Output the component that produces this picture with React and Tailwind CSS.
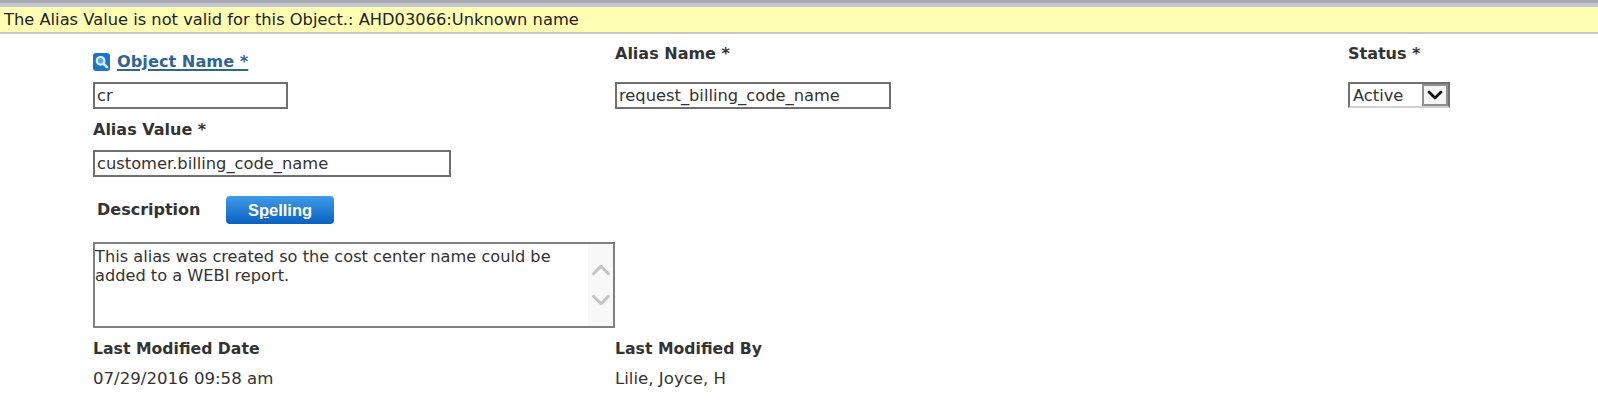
import React from 'react';
import { ChevronUp, ChevronDown } from 'lucide-react';

const font = "font-['DejaVu_Sans',Verdana,sans-serif]";

function Label({ children, className = 'text-[16px]' }) {
  return <div className={`leading-[20px] font-bold text-[#333333] ${className}`}>{children}</div>;
}

function Field({ value, width }) {
  return (
    <div className={`${width} h-[27px] border-2 border-[#707070] bg-white px-[2px] text-[16.3px] leading-[23px] text-[#333333] whitespace-nowrap overflow-hidden`}>
      {value}
    </div>
  );
}

function LookupIcon() {
  return (
    <svg width="17" height="18" viewBox="0 0 17 18">
      <rect width="17" height="18" rx="3" fill="#1a76c9" />
      <circle cx="7.6" cy="7.8" r="3.8" fill="#5aa5e6" stroke="#dcefff" strokeWidth="2.2" />
      <path d="M10.6 10.8 L14 14.2" stroke="#dcefff" strokeWidth="2.6" strokeLinecap="round" />
    </svg>
  );
}

export default function App() {
  return (
    <div className={`${font} w-[1598px] h-[404px] bg-white overflow-hidden`}>
      <div className="h-[7px] bg-[#c4c6d2] border-t-[3px] border-[#a9aab2]" />
      <div className="h-[27px] bg-[#ffffb4] border-b-2 border-[#c8c8c0] pl-[4px] text-[16.3px] leading-[25px] text-[#222222]">
        The Alias Value is not valid for this Object.: AHD03066:Unknown name
      </div>

      <div className="pl-[93px]">
        <div className="grid grid-cols-[522px_733px_1fr] h-[48px]">
          <div className="flex items-center gap-[7px] pt-[8px] h-[48px]">
            <LookupIcon />
            <a className="text-[16.2px] leading-[20px] font-bold text-[#2f6497] underline decoration-[1.5px] underline-offset-2">Object Name *</a>
          </div>
          <Label className="text-[16px] pt-[10px]">Alias Name *</Label>
          <Label className="text-[16px] pt-[10px]">Status *</Label>
        </div>

        <div className="grid grid-cols-[522px_733px_1fr]">
          <Field value="cr" width="w-[195px]" />
          <Field value="request_billing_code_name" width="w-[276px]" />
          <div className="flex w-[102px] h-[26px] border-2 border-[#707070] border-b-[#d0d0d0] bg-white text-[16.3px] leading-[23px] text-[#333333]">
            <span className="flex-1 pl-[3px]">Active</span>
            <span className="flex items-center justify-center w-[26px] bg-[#f4f4f4] border-2 border-[#909090] overflow-hidden">
              <ChevronDown size={24} strokeWidth={2.8} className="shrink-0 text-black" />
            </span>
          </div>
        </div>

        <Label className="text-[16px] mt-[11px]">Alias Value *</Label>
        <div className="mt-[10px]">
          <Field value="customer.billing_code_name" width="w-[358px]" />
        </div>

        <div className="flex items-center mt-[19px] pl-[4px] h-[28px]">
          <Label className="text-[16px] w-[129px]">Description</Label>
          <button className="w-[108px] h-[28px] rounded-[4px] bg-gradient-to-b from-[#3f9be8] to-[#0560c2] font-['Liberation_Sans',Arial,sans-serif] text-[16.5px] font-bold text-white">
            S<span className="underline">p</span>elling
          </button>
        </div>

        <div className="flex w-[522px] h-[86px] mt-[18px] border-2 border-[#808080] bg-white">
          <div className="flex-1 pt-[3px] text-[16.2px] leading-[19px] text-[#333333]">
            This alias was created so the cost center name could be<br />added to a WEBI report.
          </div>
          <div className="flex flex-col items-center justify-center w-[25px] bg-[#f8f8f8]">
            <ChevronUp size={30} strokeWidth={2.4} className="shrink-0 text-[#c4c4c4]" />
            <ChevronDown size={30} strokeWidth={2.4} className="shrink-0 text-[#c4c4c4]" />
          </div>
        </div>

        <div className="grid grid-cols-[522px_1fr] mt-[11px]">
          <Label className="text-[15.7px]">Last Modified Date</Label>
          <Label className="text-[15.7px]">Last Modified By</Label>
          <div className="mt-[10px] text-[16.6px] leading-[20px] text-[#333333]">07/29/2016 09:58 am</div>
          <div className="mt-[10px] text-[16.6px] leading-[20px] text-[#333333]">Lilie, Joyce, H</div>
        </div>
      </div>
    </div>
  );
}
